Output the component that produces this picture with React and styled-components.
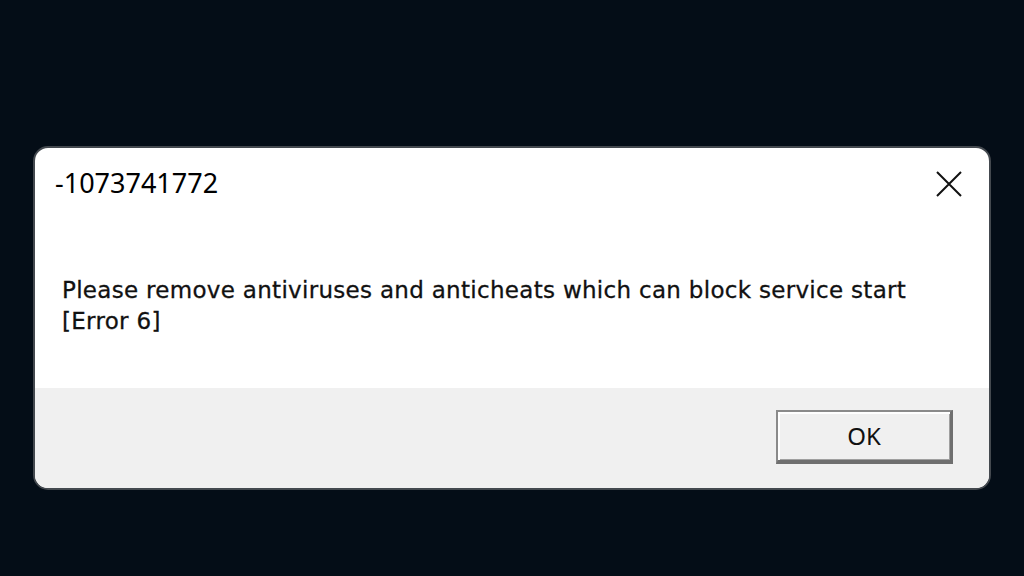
import styled, { createGlobalStyle } from "styled-components";

const Global = createGlobalStyle`
  html, body {
    margin: 0;
    padding: 0;
    background: #040d17;
  }
  #root {
    width: 1024px;
    height: 576px;
  }
`;

const Screen = styled.div`
  width: 1024px;
  height: 576px;
  box-sizing: border-box;
  padding: 146px 0 0 33px;
  background: #040d17;
`;

const Dialog = styled.div`
  width: 958px;
  height: 344px;
  box-sizing: border-box;
  border: 2px solid #44494f;
  border-radius: 15px;
  background: #ffffff;
  overflow: hidden;
  display: flex;
  flex-direction: column;
`;

const Body = styled.div`
  flex: 1;
  position: relative;
  padding: 17px 0 0 20px;
  color: #000;
`;

const Title = styled.div`
  font-size: 27px;
  line-height: 36px;
  font-family: "Noto Sans", "Open Sans", sans-serif;
`;

const Close = styled.button`
  position: absolute;
  top: 22px;
  right: 26px;
  width: 28px;
  height: 28px;
  padding: 0;
  border: none;
  background: transparent;
  display: flex;
  align-items: center;
  justify-content: center;
`;

const Message = styled.div`
  margin: 74px 0 0 7px;
  font-size: 23px;
  line-height: 31px;
  font-family: "DejaVu Sans", sans-serif;
  letter-spacing: 0.3px;
  color: #111;
  -webkit-text-stroke: 0.3px #111;
`;

const Footer = styled.div`
  height: 100px;
  background: #f0f0f0;
  display: flex;
  justify-content: flex-end;
  align-items: flex-start;
  padding: 22px 36px 0 0;
  box-sizing: border-box;
`;

const Button = styled.button`
  width: 177px;
  height: 54px;
  box-sizing: border-box;
  background: #f0f0f0;
  border-top: 2px solid #8a8a8a;
  border-left: 2px solid #8a8a8a;
  border-right: 3px solid #6f6f6f;
  border-bottom: 4px solid #6f6f6f;
  box-shadow: inset 2px 2px 0 #ffffff, inset -1px -1px 0 #a0a0a0;
  font-family: "Noto Sans", sans-serif;
  font-size: 24px;
  color: #111;
  padding: 0 0 2px;
`;

export default function App() {
  return (
    <>
      <Global />
      <Screen>
        <Dialog>
          <Body>
            <Title>-1073741772</Title>
            <Close>
              <svg width="26" height="26" viewBox="0 0 26 26">
                <path d="M1 1 L25 25 M25 1 L1 25" stroke="#111" strokeWidth="2" fill="none" />
              </svg>
            </Close>
            <Message>
              Please remove antiviruses and anticheats which can block service start
              <br />
              [Error 6]
            </Message>
          </Body>
          <Footer>
            <Button>OK</Button>
          </Footer>
        </Dialog>
      </Screen>
    </>
  );
}
